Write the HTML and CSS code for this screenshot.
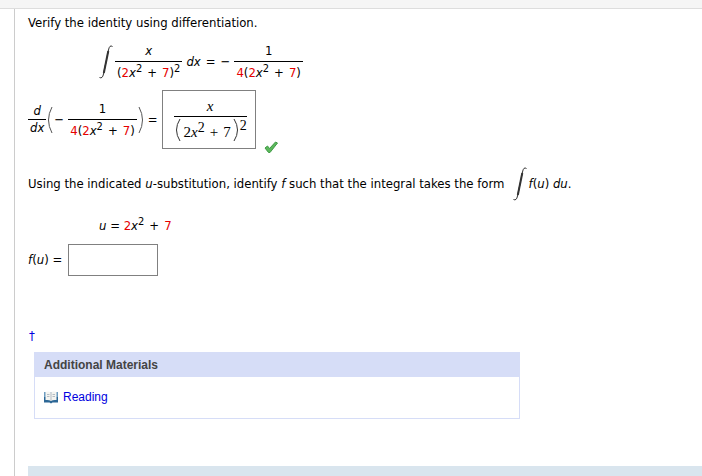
FILE: index.html
```
<!DOCTYPE html>
<html lang="en">
<head>
    <meta charset="UTF-8">
    <meta name="viewport" content="width=device-width, initial-scale=1.0">
    <title>Verify the identity</title>
    <link rel="stylesheet" href="styles.css">
</head>
<body>
    <header class="topbar"></header>
    <main class="question">
        <p class="line">Verify the identity using differentiation.</p>

        <div class="math identity">
            <svg class="integral" viewBox="0 0 14 34" aria-label="integral">
                <path d="M13.500 1.500Q10.500 -.5 9.500 5L4.500 29Q3.500 34 .5 32.500"/>
                <path class="thick" d="M9.300 6L4.800 28"/>
            </svg>
            <span class="frac">
                <span class="num"><i>x</i></span>
                <span class="den">(<b>2</b><i>x</i><sup>2</sup><span class="op">+</span><b>7</b>)<sup>2</sup></span>
            </span>
            <span class="mid"><i>dx</i><span class="op">=</span>−</span>
            <span class="frac">
                <span class="num">1</span>
                <span class="den"><b>4</b>(<b>2</b><i>x</i><sup>2</sup><span class="op">+</span><b>7</b>)</span>
            </span>
        </div>

        <div class="math derivative">
            <span class="frac tight">
                <span class="num"><i>d</i></span>
                <span class="den"><i>dx</i></span>
            </span>
            <svg class="paren" viewBox="0 0 6 28"><path d="M5 1Q-2 14 5 27"/></svg>
            <span class="minus">−</span>
            <span class="frac">
                <span class="num">1</span>
                <span class="den"><b>4</b>(<b>2</b><i>x</i><sup>2</sup><span class="op">+</span><b>7</b>)</span>
            </span>
            <svg class="paren" viewBox="0 0 6 28"><path d="M1 1Q8 14 1 27"/></svg>
            <span class="equals">=</span>
            <div class="answer">
                <span class="frac">
                    <span class="num"><i>x</i></span>
                    <span class="den">
                        <svg class="paren small" viewBox="0 0 6 24"><path d="M5 1Q-2 12 5 23"/></svg>
                        <span class="inner">2<i>x</i><sup>2</sup><span class="op">+</span>7</span>
                        <svg class="paren small" viewBox="0 0 6 24"><path d="M1 1Q8 12 1 23"/></svg>
                        <span><sup>2</sup></span>
                    </span>
                </span>
            </div>
            <svg class="check" viewBox="0 0 14 12" aria-label="correct">
                <path d="M1 7L3.500 5L5.500 7.500L11.500 1L13.500 2L6 11.500H4.500Z"/>
            </svg>
        </div>

        <div class="math form-line">
            <span>Using the indicated <i>u</i>-substitution, identify <i>f</i> such that the integral takes the form</span>
            <svg class="integral" viewBox="0 0 14 34" aria-label="integral">
                <path d="M13.500 1.500Q10.500 -.5 9.500 5L4.500 29Q3.500 34 .5 32.500"/>
                <path class="thick" d="M9.300 6L4.800 28"/>
            </svg>
            <span><i>f</i>(<i>u</i>) <i>du</i>.</span>
        </div>

        <p class="line substitution"><i>u</i> = <b>2</b><i>x</i><sup>2</sup><span class="op">+</span><b>7</b></p>

        <div class="math field">
            <label for="fu"><i>f</i>(<i>u</i>) =</label>
            <input type="text" id="fu" name="fu">
        </div>

        <p class="line note"><a href="#note">†</a></p>

        <section class="materials">
            <h2>Additional Materials</h2>
            <a class="reading" href="#reading">
                <svg class="book" viewBox="0 0 14 13">
                    <path fill="#6d9cc0" d="M0 1H14V7H0Z"/>
                    <path fill="#2c6796" d="M0 6H14V11.500H8.500L7 12.500L5.500 11.500H0Z"/>
                    <path fill="#f4f4f0" d="M1.500 1Q5 0 7 1.500Q9 0 12.500 1V9Q9 8.500 7 10Q5 8.500 1.500 9Z"/>
                    <path stroke="#b4bcc4" fill="none" d="M7 1.500V10M3 3.500H5.500M3 5.500H5.500M8.500 3.500H11M8.500 5.500H11"/>
                </svg>
                <span>Reading</span>
            </a>
        </section>

        <div class="next-bar"></div>
    </main>
</body>
</html>
```
FILE: styles.css
```
* {
    box-sizing: border-box;
}
body {
    display: flex;
    flex-direction: column;
    min-height: 100vh;
    margin: 0;
    background: #fff;
    color: #000;
    font-family: "DejaVu Sans Condensed", "DejaVu Sans", Verdana, sans-serif;
    font-stretch: condensed;
    font-size: 13px;
    line-height: 16px;
}
p {
    margin: 0;
}
/* red marks the randomized numbers */
b {
    color: #e60000;
    font-weight: normal;
}
sup {
    font-size: 11px;
    line-height: 0;
    vertical-align: 5px;
}
.op {
    margin: 0 5px;
}
.topbar {
    height: 9px;
    background: #f5f5f5;
    border-bottom: 1px solid #ddd;
}
.question {
    flex: 1;
    margin-left: 14px;
    padding: 6px 0 0 13px;
    border-left: 1px solid #ccc;
}
.math {
    display: flex;
    align-items: center;
}
.identity {
    margin: 12px 0 9px;
    padding-left: 71px;
}
.integral {
    flex: none;
    width: 14px;
    height: 34px;
    margin-right: 2px;
    fill: none;
    stroke: #333;
}
.thick {
    stroke-width: 2;
}
.frac {
    display: flex;
    flex-direction: column;
    text-align: center;
    white-space: nowrap;
}
.num {
    padding-bottom: 2px;
}
.den {
    padding: 3px 2px 0;
    border-top: 1px solid #000;
}
.mid {
    margin: 0 4px;
}
.tight .num,
.tight .den {
    padding: 0 2px;
}
.paren {
    flex: none;
    width: 6px;
    height: 28px;
    margin: 0 1px;
    fill: none;
    stroke: #555;
}
.minus {
    margin-right: 4px;
}
.equals {
    margin: 0 4px 0 3px;
}
.answer {
    display: flex;
    align-items: center;
    height: 59px;
    padding: 0 8px 0 11px;
    border: 1px solid #808080;
    font-family: "Liberation Serif", "Times New Roman", serif;
    font-size: 15px;
}
.answer .den {
    display: flex;
    align-items: center;
    padding: 1px 0 0;
}
.answer .inner {
    padding: 4px 1px 0 2px;
}
.answer sup {
    font-size: 14px;
}
.answer .small {
    height: 24px;
    stroke: #333;
}
.check {
    align-self: flex-end;
    width: 14px;
    height: 12px;
    margin: 0 0 -4px 8px;
    fill: #5cb85c;
    stroke: #3f9a45;
}
.form-line {
    margin: 18px 0 17px;
}
.form-line .integral {
    margin-left: 8px;
}
.substitution {
    padding-left: 71px;
}
.field {
    margin: 10px 0 52px;
}
.field input {
    width: 90px;
    height: 32px;
    margin-left: 6px;
    border: 1px solid #808080;
}
.note {
    padding-left: 1px;
}
.materials {
    max-width: 486px;
    margin: 8px 6px 47px;
    border: 1px solid #d6ddf7;
    font-family: Arial, "Liberation Sans", sans-serif;
    font-stretch: normal;
    font-size: 12px;
}
.materials h2 {
    margin: 0;
    padding: 4px 9px;
    background: #d6ddf7;
    color: #444;
    font-size: 12px;
}
a {
    color: #0000e0;
    text-decoration: none;
}
.reading {
    display: flex;
    align-items: center;
    gap: 5px;
    padding: 12px 9px 13px;
}
.book {
    width: 14px;
    height: 13px;
}
.next-bar {
    height: 10px;
    background: #d9e5ee;
}
```
